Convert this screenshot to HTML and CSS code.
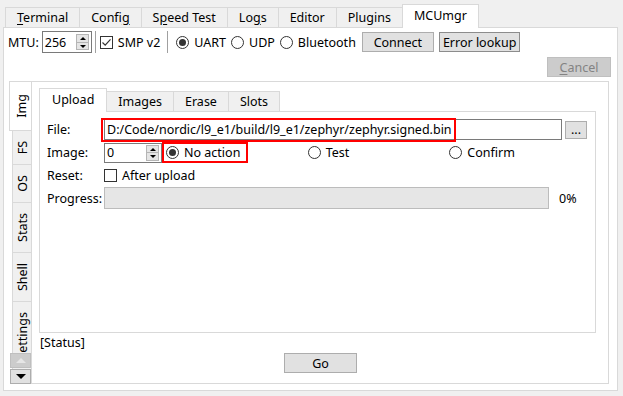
FILE: index.html
```html
<!DOCTYPE html>
<html lang="en">

<head>
    <meta charset="UTF-8">
    <title>MCUmgr</title>
    <link rel="stylesheet" href="styles.css">
</head>

<body>
    <!-- Top level tabs -->
    <div class="tabs">
        <div class="tab"><u>T</u>erminal</div>
        <div class="tab">Confi<u>g</u></div>
        <div class="tab">S<u>p</u>eed Test</div>
        <div class="tab">Lo<u>g</u>s</div>
        <div class="tab">Editor</div>
        <div class="tab">Plugins</div>
        <div class="tab active">MCUmgr</div>
    </div>

    <div class="pane">
        <!-- Connection bar -->
        <div class="toolbar">
            <span class="mtu-label">MTU:</span>
            <div class="spin mtu">
                <span class="spin-value">256</span>
                <div class="spin-btns">
                    <span class="spin-up"></span>
                    <span class="spin-down"></span>
                </div>
            </div>
            <div class="sep"></div>
            <label class="check">
                <span class="box">
                    <svg width="11" height="11" viewBox="0 0 11 11"><path d="M1.5 5.5 L4.2 8.2 L9.5 2.3" fill="none" stroke="#333" stroke-width="1.2"/></svg>
                </span>
                SMP v2
            </label>
            <div class="sep"></div>
            <label class="radio"><span class="dot on"></span>UART</label>
            <label class="radio"><span class="dot"></span>UDP</label>
            <label class="radio"><span class="dot"></span>Bluetooth</label>
            <button class="btn connect">Connect</button>
            <button class="btn lookup">Error lookup</button>
        </div>

        <div class="cancel-row">
            <button class="btn disabled"><u>C</u>ancel</button>
        </div>

        <!-- Side tabs -->
        <div class="side">
            <div class="side-tabs">
                <div class="vtab active"><span>Img</span></div>
                <div class="vtab"><span>FS</span></div>
                <div class="vtab"><span>OS</span></div>
                <div class="vtab"><span>Stats</span></div>
                <div class="vtab"><span>Shell</span></div>
                <div class="vtab"><span>Settings</span></div>
                <div class="scroll-btns">
                    <span class="scroll-up"></span>
                    <span class="scroll-down"></span>
                </div>
            </div>

            <div class="side-pane">
                <div class="subtabs">
                    <div class="subtab active">Upload</div>
                    <div class="subtab">Images</div>
                    <div class="subtab">Erase</div>
                    <div class="subtab">Slots</div>
                </div>

                <div class="subpane">
                    <div class="form">
                        <span class="label">File:</span>
                        <div class="file-row">
                            <div class="file-input">
                                D:/Code/nordic/l9_e1/build/l9_e1/zephyr/zephyr.signed.bin
                                <div class="mark file-mark"></div>
                            </div>
                            <button class="btn browse">...</button>
                        </div>

                        <span class="label">Image:</span>
                        <div class="image-row">
                            <div class="spin image">
                                <span class="spin-value">0</span>
                                <div class="spin-btns">
                                    <span class="spin-up"></span>
                                    <span class="spin-down"></span>
                                </div>
                            </div>
                            <div class="actions">
                                <label class="radio action marked"><span class="dot on"></span>No action</label>
                                <label class="radio action"><span class="dot"></span>Test</label>
                                <label class="radio action"><span class="dot"></span>Confirm</label>
                            </div>
                        </div>

                        <span class="label">Reset:</span>
                        <label class="check">
                            <span class="box"></span>
                            After upload
                        </label>

                        <span class="label">Progress:</span>
                        <div class="progress-row">
                            <div class="progress"></div>
                            <span class="percent">0%</span>
                        </div>
                    </div>
                </div>

                <div class="status">[Status]</div>
                <div class="go-row">
                    <button class="btn go">Go</button>
                </div>
            </div>
        </div>
    </div>
</body>

</html>
```

FILE: styles.css
```css
* {
    box-sizing: border-box;
}

body {
    margin: 0;
    width: 623px;
    height: 396px;
    overflow: hidden;
    background: #f0f0f0;
    font-family: 'Noto Sans', 'DejaVu Sans', sans-serif;
    font-size: 12.5px;
    color: #000;
}

button {
    font: inherit;
    color: inherit;
}

u {
    text-underline-offset: 2px;
}

/* Top tabs */
.tabs {
    display: flex;
    align-items: flex-end;
    height: 27px;
    padding-left: 5px;
}

.tab {
    height: 20px;
    line-height: 19px;
    padding: 0 11px;
    border: 1px solid #d9d9d9;
    border-bottom: none;
    background: #f0f0f0;
    margin-right: -1px;
    white-space: nowrap;
}

.tab.active {
    position: relative;
    z-index: 1;
    height: 24px;
    line-height: 21px;
    margin-bottom: -1px;
    background: #fff;
}

.pane {
    margin-left: 3px;
    width: 615px;
    height: 364px;
    background: #fff;
    border: 1px solid #d9d9d9;
    padding: 3px 6px 6px 4px;
    display: flex;
    flex-direction: column;
}

/* Connection bar */
.toolbar {
    display: flex;
    align-items: center;
    height: 22px;
}

.mtu-label {
    margin-right: 3px;
}

.spin {
    display: flex;
    align-items: center;
    background: #fff;
    border: 1px solid #7a7a7a;
}

.spin-value {
    flex: 1;
    padding-left: 2px;
}

.spin-btns {
    display: flex;
    flex-direction: column;
    width: 13px;
    height: 16px;
    margin-right: 2px;
}

.spin-up,
.spin-down {
    flex: 1;
    position: relative;
    background: #e5e5e5;
    border: 1px solid #b5b5b5;
}

.spin-up {
    border-bottom: none;
}

.spin-up::after,
.spin-down::after {
    content: '';
    position: absolute;
    left: 3px;
    border-left: 3px solid transparent;
    border-right: 3px solid transparent;
}

.spin-up::after {
    top: 2px;
    border-bottom: 3px solid #000;
}

.spin-down::after {
    top: 2px;
    border-top: 3px solid #000;
}

.spin.mtu {
    width: 50px;
    height: 22px;
}

.sep {
    width: 1px;
    height: 22px;
    background: #a0a0a0;
    margin: 0 3px;
}

.check {
    display: flex;
    align-items: center;
    gap: 5px;
}

.box {
    width: 13px;
    height: 13px;
    border: 1px solid #333;
    background: #fff;
    display: flex;
    align-items: center;
    justify-content: center;
}

.toolbar .check {
    margin: 0 4px 0 1px;
}

.radio {
    display: flex;
    align-items: center;
    gap: 5px;
    margin-left: 5px;
}

.dot {
    width: 13px;
    height: 13px;
    border: 1px solid #333;
    border-radius: 50%;
    background: #fff;
    display: flex;
    align-items: center;
    justify-content: center;
}

.dot.on::after {
    content: '';
    width: 7px;
    height: 7px;
    border-radius: 50%;
    background: #333;
}

.btn {
    height: 20px;
    padding: 0 8px;
    background: #e1e1e1;
    border: 1px solid #adadad;
    line-height: 17px;
    cursor: pointer;
    white-space: nowrap;
}

.connect {
    margin-left: 6px;
    width: 72px;
}

.lookup {
    margin-left: 5px;
    width: 81px;
    padding: 0 3px;
    border-color: #8c8c8c;
}

.cancel-row {
    display: flex;
    justify-content: flex-end;
    margin-top: 4px;
}

.btn.disabled {
    width: 64px;
    background: #cccccc;
    border-color: #bfbfbf;
    color: #838383;
}

/* Side tabs */
.side {
    flex: 1;
    display: flex;
    margin: 4px 0 0 1px;
}

.side-tabs {
    position: relative;
    width: 22px;
    overflow: hidden;
    display: flex;
    flex-direction: column;
}

.vtab {
    margin-left: 3px;
    width: 19px;
    padding: 10px 0;
    border: 1px solid #d9d9d9;
    border-right: none;
    margin-bottom: -1px;
    background: #f0f0f0;
    display: flex;
    justify-content: center;
    flex-shrink: 0;
}

.vtab span {
    writing-mode: vertical-rl;
    transform: rotate(180deg);
    line-height: 17px;
}

.vtab.active {
    position: relative;
    z-index: 1;
    margin-left: 0;
    width: 23px;
    margin-right: -1px;
    padding: 12px 0;
    background: #fff;
}

.scroll-btns {
    position: absolute;
    left: 1px;
    bottom: 0;
    z-index: 2;
    width: 21px;
    display: flex;
    flex-direction: column;
    gap: 1px;
}

.scroll-up,
.scroll-down {
    height: 15px;
    position: relative;
    border: 1px solid #adadad;
    background: #e1e1e1;
}

.scroll-up {
    background: #cccccc;
    border-color: #bfbfbf;
}

.scroll-up::after,
.scroll-down::after {
    content: '';
    position: absolute;
    left: 5px;
    top: 4px;
    border-left: 5px solid transparent;
    border-right: 5px solid transparent;
}

.scroll-up::after {
    border-bottom: 5px solid #e6e6e6;
}

.scroll-down::after {
    border-top: 5px solid #000;
}

.side-pane {
    width: 578px;
    background: #fff;
    border: 1px solid #d9d9d9;
    padding: 6px 12px 10px 7px;
    display: flex;
    flex-direction: column;
}

.subtabs {
    display: flex;
    align-items: flex-end;
    height: 23px;
}

.subtab {
    height: 20px;
    line-height: 19px;
    padding: 0 11px;
    border: 1px solid #d9d9d9;
    border-bottom: none;
    background: #f0f0f0;
    margin-right: -1px;
}

.subtab.active {
    position: relative;
    z-index: 1;
    height: 24px;
    line-height: 21px;
    margin-bottom: -1px;
    padding: 0 12px;
    background: #fff;
}

.subpane {
    height: 222px;
    border: 1px solid #d9d9d9;
    padding: 7px 8px 0 7px;
}

.form {
    display: grid;
    grid-template-columns: 57px 1fr;
    grid-template-rows: 21px 21px 20px 22px;
    row-gap: 2px;
    align-items: center;
}

.file-row {
    display: flex;
    align-items: center;
    gap: 3px;
}

.file-input {
    position: relative;
    flex: 1;
    height: 21px;
    border: 1px solid #7a7a7a;
    padding-left: 2px;
    line-height: 19px;
    white-space: nowrap;
}

.mark {
    border: 2px solid #ff0000;
}

.file-mark {
    position: absolute;
    left: -4px;
    top: -2px;
    width: 355px;
    height: 24px;
}

.browse {
    width: 22px;
    height: 18px;
    padding: 0;
    line-height: 12px;
}

.image-row {
    display: flex;
    align-items: center;
}

.spin.image {
    width: 58px;
    height: 20px;
}

.actions {
    flex: 1;
    display: grid;
    grid-template-columns: 1fr 1fr 1fr;
}

.action {
    margin: 0;
    height: 21px;
    padding-left: 4px;
}

.action.marked {
    width: 86px;
    padding-left: 2px;
    border: 2px solid #ff0000;
}

.progress-row {
    display: flex;
    align-items: center;
}

.progress {
    flex: 1;
    height: 22px;
    background: #e6e6e6;
    border: 1px solid #bcbcbc;
}

.percent {
    width: 38px;
    padding-left: 10px;
}

.status {
    height: 18px;
    line-height: 20px;
    padding-left: 1px;
}

.go-row {
    display: flex;
    justify-content: center;
    margin-top: 2px;
    padding-left: 6px;
}

.go {
    width: 73px;
}
```
